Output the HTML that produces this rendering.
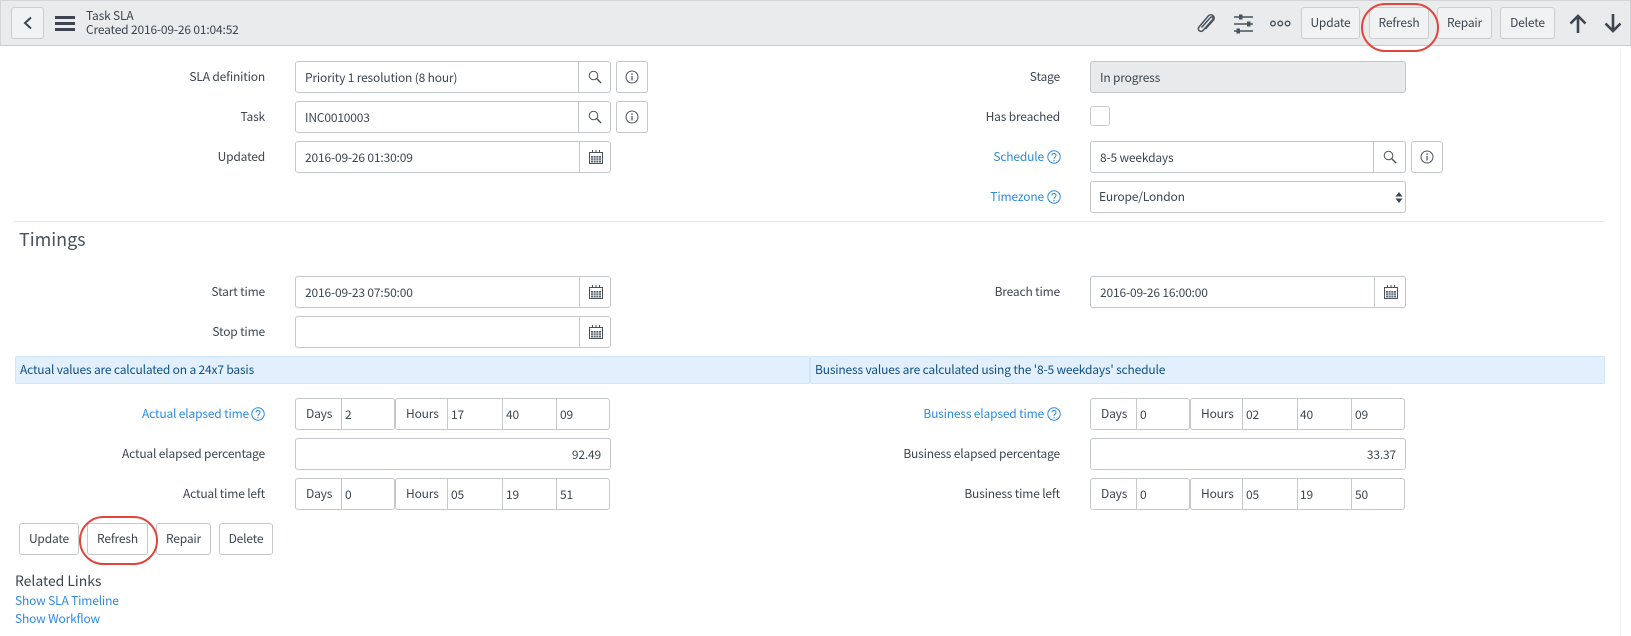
<!DOCTYPE html>
<html><head><meta charset="utf-8"><style>
html,body{margin:0;padding:0;background:#fff}
#p{position:relative;width:1631px;height:636px;overflow:hidden;background:#fff;font-family:"Noto Sans CJK JP","Liberation Sans",sans-serif;font-size:12px;letter-spacing:-.17px;color:#3d4650}
#p div{position:absolute;box-sizing:border-box}
.t{position:absolute;line-height:20px;height:20px;white-space:nowrap}
.r{text-align:right}
.l{color:#2f8ae0}
.b{background:#fff;border:1px solid #c4c7cb;border-radius:3px}
.h{background:#f1f2f3;border:1px solid #cbced1;border-radius:3px;text-align:center;line-height:29px;white-space:nowrap}
.w{background:#fff;border:1px solid #c4c7cb;border-radius:3px;text-align:center;line-height:29px;white-space:nowrap}
.v{width:1px;background:#c4c7cb}
svg{position:absolute;overflow:visible}
.bar{background:#e2f0fd;border:1px solid #cfe5f8;border-radius:2px;color:#0f4f86;line-height:26px;padding-left:4px;white-space:nowrap}
</style></head><body><div id="p">
<svg width="0" height="0"><defs>
<symbol id="s" viewBox="0 0 14 14"><circle cx="5.5" cy="5.5" r="4.3" fill="none" stroke="#4a535c" stroke-width="1"/><path d="M8.8 8.8L13 13" stroke="#4a535c" stroke-width="1.4"/></symbol>
<symbol id="n" viewBox="0 0 14 14"><circle cx="7" cy="7" r="6" fill="none" stroke="#4a535c" stroke-width="1"/><path d="M7 6v4.5" stroke="#4a535c" stroke-width="1.2"/><circle cx="7" cy="4" r=".8" fill="#4a535c"/></symbol>
<symbol id="c" viewBox="0 0 14 14"><path d="M.5 2.500h13v11H.5z" fill="none" stroke="#4a535c"/><path d="M3.500 0v3M7 0v3M10.500 0v3" stroke="#4a535c"/><path d="M2 6h10v6.500H2z" fill="#5f6871"/><path d="M2 8h10M2 10.200h10M4.500 6v6.500M7 6v6.500M9.500 6v6.500" stroke="#fff" stroke-width=".6"/></symbol>
<symbol id="q" viewBox="0 0 14 14"><circle cx="7" cy="7" r="6.200" fill="none" stroke="#2f8ae0" stroke-width="1"/><path d="M5 5.500c0-2.600 4-2.600 4 0 0 1.700-2 1.600-2 3.400" fill="none" stroke="#2f8ae0" stroke-width="1"/><circle cx="7" cy="10.700" r=".7" fill="#2f8ae0"/></symbol>
</defs></svg>

<!-- header -->
<div style="left:0;top:0;width:1631px;height:46px;background:#e9ebed;border:1px solid #d3d5d8;border-bottom:1px solid #c6c9cc"></div>
<div class="h" style="left:11px;top:7px;width:33px;height:32px"></div>
<svg style="left:23px;top:16px" width="10" height="14"><path d="M8 1.500L2 7l6 5.500" fill="none" stroke="#3d4650" stroke-width="2"/></svg>
<svg style="left:55px;top:16px" width="20" height="15"><path d="M0 1.500h20M0 7.500h20M0 13.500h20" stroke="#3d4650" stroke-width="3"/></svg>
<span class="t" style="left:86px;top:6px">Task SLA</span>
<span class="t" style="left:86px;top:20px">Created 2016-09-26 01:04:52</span>

<svg style="left:1197px;top:13px" width="20" height="20" viewBox="0 0 20 20"><path d="M6 14.500L15 4.500c1.500-1.700 3.600.3 2.200 2L7.500 17.500c-2.300 2.500-6.300-.8-4-3.500L13 2.800c2.700-3 7.500 1 5 4.200L10 16" fill="none" stroke="#4a535c" stroke-width="1.500" transform="translate(-1.500 0)"/></svg>
<svg style="left:1234px;top:14px" width="20" height="20"><path d="M0 3h19M0 10h19M0 17h19" stroke="#4a535c" stroke-width="1.500"/><path d="M5 0.500h3.500v5H5zM13 7.500h3.500v5H13zM2.500 14.500H6v5H2.500z" fill="#4a535c"/></svg>
<svg style="left:1270px;top:20px" width="21" height="7"><circle cx="3" cy="3.500" r="2.300" fill="none" stroke="#4a535c" stroke-width="1.400"/><circle cx="10.300" cy="3.500" r="2.300" fill="none" stroke="#4a535c" stroke-width="1.400"/><circle cx="17.600" cy="3.500" r="2.300" fill="none" stroke="#4a535c" stroke-width="1.400"/></svg>
<div class="h" style="left:1301px;top:7px;width:59px;height:32px">Update</div>
<div class="h" style="left:1369px;top:7px;width:60px;height:32px">Refresh</div>
<div class="h" style="left:1437px;top:7px;width:55px;height:32px">Repair</div>
<div class="h" style="left:1500px;top:7px;width:55px;height:32px">Delete</div>
<svg style="left:1569px;top:14px" width="18" height="20"><path d="M9 19V2M1.500 9.500L9 2l7.500 7.500" fill="none" stroke="#3d4650" stroke-width="2.600"/></svg>
<svg style="left:1604px;top:14px" width="18" height="20"><path d="M9 0v17M1.500 9.500L9 17l7.500-7.500" fill="none" stroke="#3d4650" stroke-width="2.600"/></svg>
<div style="left:1620px;top:51px;width:1px;height:585px;background:#f1f2f3"></div>

<!-- top form left -->
<span class="t r" style="left:100px;width:165px;top:67px">SLA definition</span>
<div class="b" style="left:295px;top:61px;width:316px;height:32px"></div><div class="v" style="left:578px;top:61px;height:32px"></div>
<span class="t" style="left:305px;top:68px">Priority 1 resolution (8 hour)</span>
<svg style="left:588px;top:70px" width="14" height="14"><use href="#s"/></svg>
<div class="b" style="left:616px;top:61px;width:32px;height:32px"></div><svg style="left:625px;top:70px" width="14" height="14"><use href="#n"/></svg>

<span class="t r" style="left:100px;width:165px;top:107px">Task</span>
<div class="b" style="left:295px;top:101px;width:316px;height:32px"></div><div class="v" style="left:578px;top:101px;height:32px"></div>
<span class="t" style="left:305px;top:108px">INC0010003</span>
<svg style="left:588px;top:110px" width="14" height="14"><use href="#s"/></svg>
<div class="b" style="left:616px;top:101px;width:32px;height:32px"></div><svg style="left:625px;top:110px" width="14" height="14"><use href="#n"/></svg>

<span class="t r" style="left:100px;width:165px;top:147px">Updated</span>
<div class="b" style="left:295px;top:141px;width:316px;height:32px"></div><div class="v" style="left:579px;top:141px;height:32px"></div>
<span class="t" style="left:305px;top:148px">2016-09-26 01:30:09</span>
<svg style="left:589px;top:150px" width="14" height="14"><use href="#c"/></svg>

<!-- top form right -->
<span class="t r" style="left:900px;width:160px;top:67px">Stage</span>
<div class="b" style="left:1090px;top:61px;width:316px;height:32px;background:#e9eaeb"></div>
<span class="t" style="left:1100px;top:68px">In progress</span>
<span class="t r" style="left:900px;width:160px;top:107px">Has breached</span>
<div class="b" style="left:1090px;top:106px;width:20px;height:20px"></div>
<span class="t r l" style="left:900px;width:144px;top:147px">Schedule</span>
<svg style="left:1047px;top:150px" width="14" height="14"><use href="#q"/></svg>
<div class="b" style="left:1090px;top:141px;width:316px;height:32px"></div><div class="v" style="left:1373px;top:141px;height:32px"></div>
<span class="t" style="left:1100px;top:148px">8-5 weekdays</span>
<svg style="left:1383px;top:150px" width="14" height="14"><use href="#s"/></svg>
<div class="b" style="left:1411px;top:141px;width:32px;height:32px"></div><svg style="left:1420px;top:150px" width="14" height="14"><use href="#n"/></svg>
<span class="t r l" style="left:900px;width:144px;top:187px">Timezone</span>
<svg style="left:1047px;top:190px" width="14" height="14"><use href="#q"/></svg>
<div class="b" style="left:1090px;top:181px;width:316px;height:32px"></div>
<span class="t" style="left:1099px;top:187px">Europe/London</span>
<svg style="left:1395px;top:192px" width="8" height="11"><path d="M4 0l3.500 4.500h-7zM4 11L.5 6.500h7z" fill="#3d4650"/></svg>

<div style="left:14px;top:221px;width:1590px;height:1px;background:#e6e7e9"></div>
<span class="t" style="left:19px;top:229px;font-size:18px;letter-spacing:-.05px;color:#4a535c">Timings</span>

<!-- timings -->
<span class="t r" style="left:100px;width:165px;top:282px">Start time</span>
<div class="b" style="left:295px;top:276px;width:316px;height:32px"></div><div class="v" style="left:579px;top:276px;height:32px"></div>
<span class="t" style="left:305px;top:283px">2016-09-23 07:50:00</span>
<svg style="left:589px;top:285px" width="14" height="14"><use href="#c"/></svg>
<span class="t r" style="left:100px;width:165px;top:322px">Stop time</span>
<div class="b" style="left:295px;top:316px;width:316px;height:32px"></div><div class="v" style="left:579px;top:316px;height:32px"></div>
<svg style="left:589px;top:325px" width="14" height="14"><use href="#c"/></svg>
<span class="t r" style="left:900px;width:160px;top:282px">Breach time</span>
<div class="b" style="left:1090px;top:276px;width:316px;height:32px"></div><div class="v" style="left:1374px;top:276px;height:32px"></div>
<span class="t" style="left:1100px;top:283px">2016-09-26 16:00:00</span>
<svg style="left:1384px;top:285px" width="14" height="14"><use href="#c"/></svg>

<div class="bar" style="left:15px;top:356px;width:795px;height:28px">Actual values are calculated on a 24x7 basis</div>
<div class="bar" style="left:810px;top:356px;width:795px;height:28px">Business values are calculated using the '8-5 weekdays' schedule</div>

<!-- left durations -->
<span class="t r l" style="left:100px;width:149px;top:404px">Actual elapsed time</span>
<svg style="left:251px;top:407px" width="14" height="14"><use href="#q"/></svg>
<div class="b" style="left:295px;top:398px;width:100px;height:32px"></div><div class="v" style="left:341px;top:398px;height:32px"></div>
<div class="b" style="left:395px;top:398px;width:215px;height:32px"></div><div class="v" style="left:447px;top:398px;height:32px"></div><div class="v" style="left:502px;top:398px;height:32px"></div><div class="v" style="left:556px;top:398px;height:32px"></div>
<span class="t" style="left:306px;top:404px">Days</span><span class="t" style="left:345px;top:405px">2</span><span class="t" style="left:406px;top:404px">Hours</span><span class="t" style="left:451px;top:405px">17</span><span class="t" style="left:506px;top:405px">40</span><span class="t" style="left:560px;top:405px">09</span>

<span class="t r" style="left:100px;width:165px;top:444px">Actual elapsed percentage</span>
<div class="b" style="left:295px;top:438px;width:316px;height:32px"></div>
<span class="t r" style="left:500px;width:101px;top:445px">92.49</span>

<span class="t r" style="left:100px;width:165px;top:484px">Actual time left</span>
<div class="b" style="left:295px;top:478px;width:100px;height:32px"></div><div class="v" style="left:341px;top:478px;height:32px"></div>
<div class="b" style="left:395px;top:478px;width:215px;height:32px"></div><div class="v" style="left:447px;top:478px;height:32px"></div><div class="v" style="left:502px;top:478px;height:32px"></div><div class="v" style="left:556px;top:478px;height:32px"></div>
<span class="t" style="left:306px;top:484px">Days</span><span class="t" style="left:345px;top:485px">0</span><span class="t" style="left:406px;top:484px">Hours</span><span class="t" style="left:451px;top:485px">05</span><span class="t" style="left:506px;top:485px">19</span><span class="t" style="left:560px;top:485px">51</span>

<!-- right durations -->
<span class="t r l" style="left:880px;width:164px;top:404px">Business elapsed time</span>
<svg style="left:1047px;top:407px" width="14" height="14"><use href="#q"/></svg>
<div class="b" style="left:1090px;top:398px;width:100px;height:32px"></div><div class="v" style="left:1136px;top:398px;height:32px"></div>
<div class="b" style="left:1190px;top:398px;width:215px;height:32px"></div><div class="v" style="left:1242px;top:398px;height:32px"></div><div class="v" style="left:1297px;top:398px;height:32px"></div><div class="v" style="left:1351px;top:398px;height:32px"></div>
<span class="t" style="left:1101px;top:404px">Days</span><span class="t" style="left:1140px;top:405px">0</span><span class="t" style="left:1201px;top:404px">Hours</span><span class="t" style="left:1246px;top:405px">02</span><span class="t" style="left:1300px;top:405px">40</span><span class="t" style="left:1355px;top:405px">09</span>

<span class="t r" style="left:860px;width:200px;top:444px">Business elapsed percentage</span>
<div class="b" style="left:1090px;top:438px;width:316px;height:32px"></div>
<span class="t r" style="left:1296px;width:100px;top:445px">33.37</span>

<span class="t r" style="left:860px;width:200px;top:484px">Business time left</span>
<div class="b" style="left:1090px;top:478px;width:100px;height:32px"></div><div class="v" style="left:1136px;top:478px;height:32px"></div>
<div class="b" style="left:1190px;top:478px;width:215px;height:32px"></div><div class="v" style="left:1242px;top:478px;height:32px"></div><div class="v" style="left:1297px;top:478px;height:32px"></div><div class="v" style="left:1351px;top:478px;height:32px"></div>
<span class="t" style="left:1101px;top:484px">Days</span><span class="t" style="left:1140px;top:485px">0</span><span class="t" style="left:1201px;top:484px">Hours</span><span class="t" style="left:1246px;top:485px">05</span><span class="t" style="left:1300px;top:485px">19</span><span class="t" style="left:1355px;top:485px">50</span>

<!-- bottom buttons -->
<div class="w" style="left:19px;top:523px;width:60px;height:32px">Update</div>
<div class="w" style="left:87px;top:523px;width:61px;height:32px">Refresh</div>
<div class="w" style="left:156px;top:523px;width:55px;height:32px">Repair</div>
<div class="w" style="left:219px;top:523px;width:54px;height:32px">Delete</div>

<span class="t" style="left:15px;top:571px;font-size:14px;letter-spacing:-.05px;color:#3d4650">Related Links</span>
<span class="t l" style="left:15px;top:591px">Show SLA Timeline</span>
<span class="t l" style="left:15px;top:609px">Show Workflow</span>

<!-- red ovals -->
<div style="left:1361px;top:3px;width:78px;height:49px;border:2.500px solid #e0463c;border-radius:26px"></div>
<div style="left:79px;top:516px;width:79px;height:49px;border:2.500px solid #e0463c;border-radius:26px"></div>
</div></body></html>
